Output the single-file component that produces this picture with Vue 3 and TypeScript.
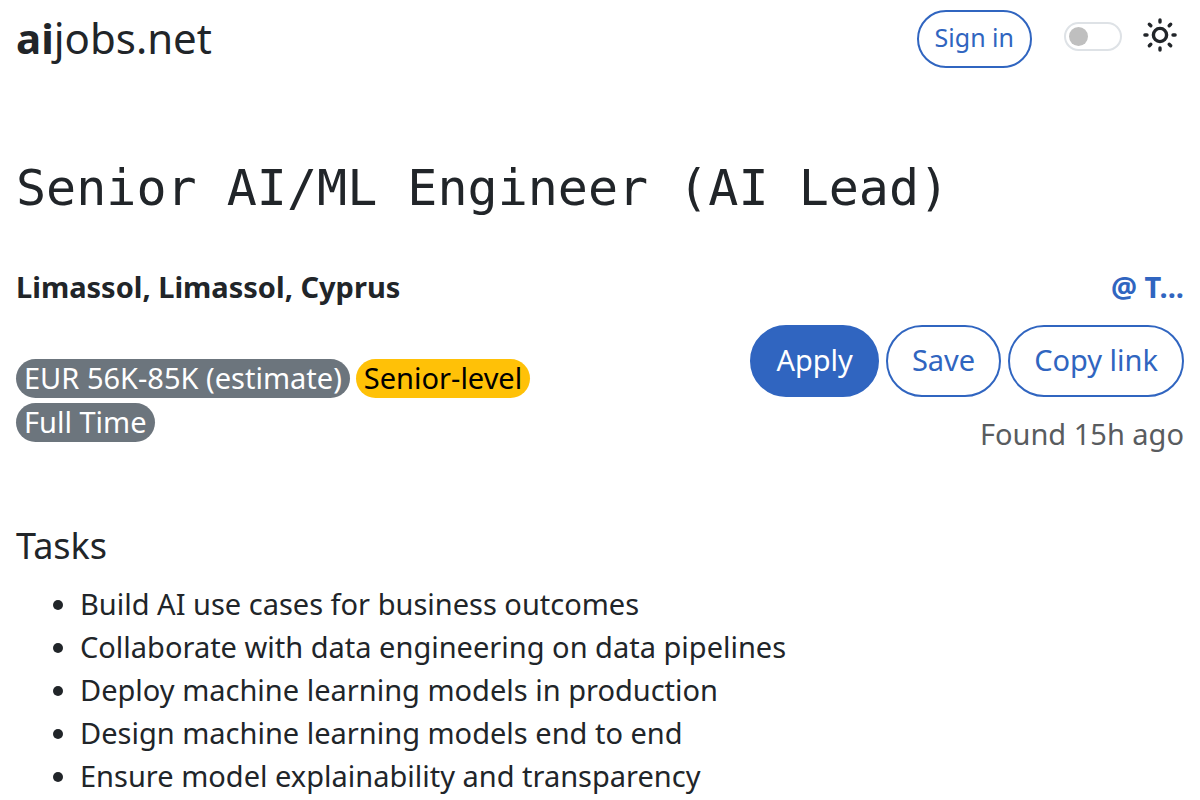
<script setup lang="ts">
import { ref } from 'vue'

const dark = ref(false)
const tasks: string[] = [
  'Build AI use cases for business outcomes',
  'Collaborate with data engineering on data pipelines',
  'Deploy machine learning models in production',
  'Design machine learning models end to end',
  'Ensure model explainability and transparency',
]
const rays: number[] = [0, 45, 90, 135, 180, 225, 270, 315]
</script>

<template>
  <div class="page">
    <header class="bar">
      <a class="brand" href="#"><b>ai</b>jobs.net</a>
      <div class="tools">
        <button class="btn small" type="button">Sign in</button>
        <label class="theme">
          <input v-model="dark" class="switch" type="checkbox" role="switch" aria-label="Dark mode" />
          <svg class="sun" viewBox="0 0 36 36" aria-hidden="true">
            <circle cx="18" cy="17" r="6.6" />
            <line v-for="r in rays" :key="r" x1="18" y1="1.9" x2="18" y2="4" :transform="`rotate(${r} 18 17)`" />
          </svg>
        </label>
      </div>
    </header>
    <main>
      <h1>Senior AI/ML Engineer (AI Lead)</h1>
      <div class="row">
        <h2>Limassol, Limassol, Cyprus</h2>
        <a class="company" href="#">@ T...</a>
      </div>
      <div class="row">
        <div class="badges">
          <span class="badge">EUR 56K-85K (estimate)</span>
          <span class="badge level">Senior-level</span>
          <span class="badge">Full Time</span>
        </div>
        <div class="side">
          <div class="actions">
            <button class="btn primary" type="button">Apply</button>
            <button class="btn" type="button">Save</button>
            <button class="btn" type="button">Copy link</button>
          </div>
          <p class="found">Found 15h ago</p>
        </div>
      </div>
      <h3>Tasks</h3>
      <ul>
        <li v-for="task in tasks" :key="task">{{ task }}</li>
      </ul>
    </main>
  </div>
</template>

<style>
body {
  margin: 0;
  background: #fff;
  overflow: hidden;
}
</style>

<style scoped>
.page {
  padding: 0 16px;
  color: #212529;
  font: 400 29px/43px "Noto Sans", sans-serif;
}
.bar {
  display: flex;
  justify-content: space-between;
  align-items: center;
  height: 78px;
}
.brand {
  padding-bottom: 4px;
  color: inherit;
  text-decoration: none;
  font-size: 42px;
}
.tools,
.theme {
  display: flex;
  align-items: center;
}
.tools {
  gap: 32px;
}
.theme {
  gap: 20px;
  padding: 0 6px 6px 0;
}
.btn {
  box-sizing: border-box;
  height: 72px;
  padding: 0 24px 4px;
  border: 2px solid #3065c0;
  border-radius: 36px;
  background: transparent;
  color: #3065c0;
  font: inherit;
  white-space: nowrap;
}
.btn.small {
  height: 58px;
  padding: 0 16px 4px;
  font-size: 25px;
}
.btn.primary {
  background: #3065c0;
  color: #fff;
}
.switch {
  appearance: none;
  box-sizing: border-box;
  display: flex;
  align-items: center;
  width: 58px;
  height: 29px;
  margin: 0;
  padding: 0 3px;
  border: 2px solid #dee2e6;
  border-radius: 15px;
}
.switch::before {
  content: "";
  width: 19px;
  height: 19px;
  border-radius: 50%;
  background: #bfbfbf;
}
.switch:checked {
  justify-content: flex-end;
}
.sun {
  width: 36px;
  height: 36px;
  fill: none;
  stroke: #212529;
  stroke-width: 3.4;
  stroke-linecap: round;
}
h1 {
  margin: 80px 0 0;
  font: 400 50px/60px "DejaVu Sans Mono", monospace;
}
h2 {
  margin: 0;
  font-size: 29px;
  font-weight: 700;
}
.row {
  display: flex;
  justify-content: space-between;
}
h1 + .row {
  margin-top: 47px;
}
.company {
  color: #3065c0;
  font-weight: 700;
  text-decoration: none;
}
.badges {
  display: flex;
  flex-wrap: wrap;
  align-content: flex-start;
  gap: 5px 6px;
  width: 50%;
  padding-top: 51px;
}
.badge {
  padding: 0 8px 2px;
  border-radius: 20px;
  background: #6c757d;
  color: #fff;
  line-height: 37px;
}
.badge.level {
  background: #ffc107;
  color: #000;
}
.side {
  padding-top: 17px;
}
.actions {
  display: flex;
  gap: 7px;
}
.found {
  margin: 15px 0 0;
  color: #595c5f;
  text-align: right;
}
h3 {
  margin: 69px 0 0;
  font-size: 36px;
  font-weight: 400;
  line-height: 44px;
}
ul {
  margin: 14px 0 0;
  padding-left: 64px;
}
</style>
